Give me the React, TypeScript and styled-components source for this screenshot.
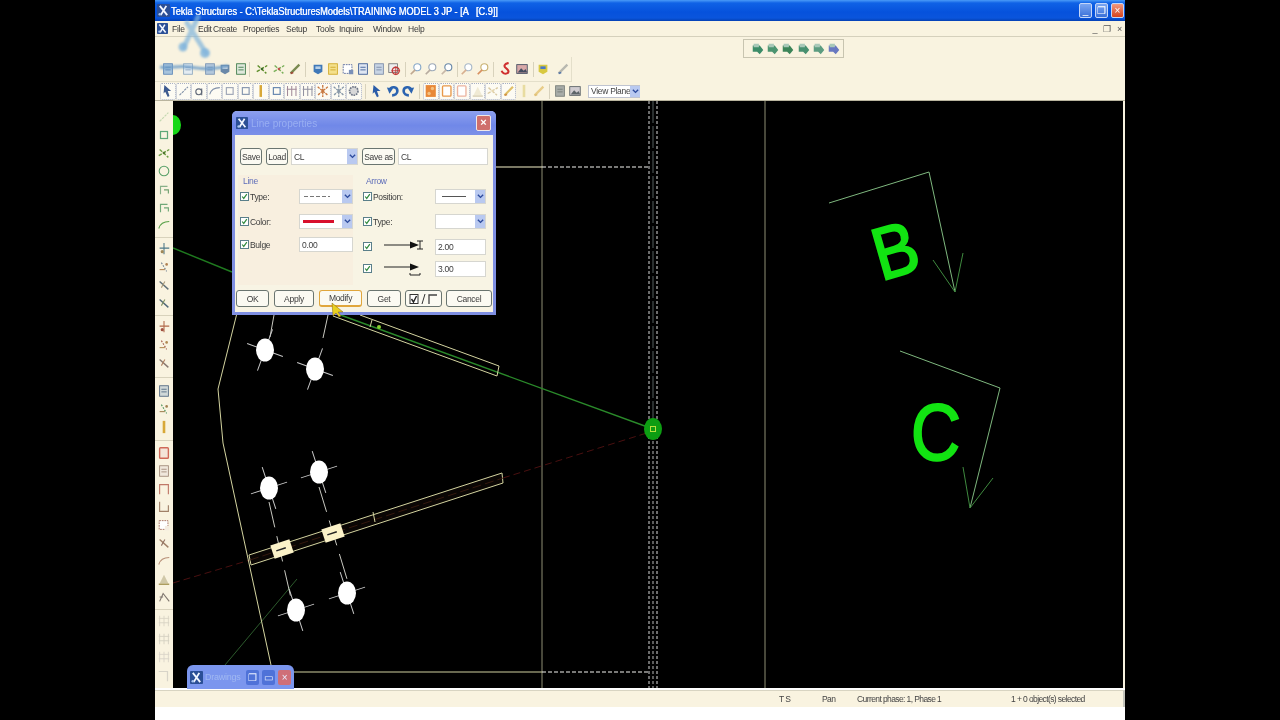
import React from 'react';
import styled, { createGlobalStyle } from 'styled-components';

const GlobalStyle = createGlobalStyle`
  html, body {
    margin: 0;
    height: 100%;
    background: #000;
    overflow: hidden;
  }
`;

const CREAM = '#f9f3e0';
const UI_FONT = '"Liberation Sans", Arial, sans-serif';

type IconSpec = { kind: string; a?: string; b?: string };

const Shapes: Record<string, (a: string, b: string) => React.ReactNode> = {
  page: (a, b) => (
    <>
      <rect x="3" y="2" width="10" height="12" fill={b} stroke={a} />
      <path d="M5 6h6M5 9h6" stroke={a} />
    </>
  ),
  cube: (a, b) => (
    <>
      <path d="M3 3h10v8l-5 3-5-3z" fill={a} />
      <path d="M5 5h6v3H5z" fill={b} />
    </>
  ),
  dotbox: (a, b) => (
    <>
      <rect x="2.5" y="3" width="10" height="10" fill="#fff" stroke={a} strokeDasharray="2 1" />
      <rect x="9" y="9" width="5" height="5" fill={b} />
    </>
  ),
  target: a => (
    <>
      <rect x="2" y="2" width="10" height="10" fill="#eee" stroke="#777" />
      <circle cx="10" cy="10" r="4" fill="none" stroke={a} strokeWidth="1.5" />
      <path d="M10 5v10M5 10h10" stroke={a} />
    </>
  ),
  zoom: (a, b) => (
    <>
      <circle cx="9.5" cy="6" r="4" fill="#fff" stroke={a} strokeWidth="1.3" />
      <path d="M7 9l-5 5" stroke={b} strokeWidth="2" />
    </>
  ),
  cross: (a, b) => (
    <>
      <path d="M2 11L14 4M3 4l10 9" stroke={a} strokeWidth="1.6" strokeDasharray="4 1.5" />
      <circle cx="8" cy="8" r="1.5" fill={b} />
    </>
  ),
  pencil: (a, b) => (
    <>
      <path d="M3 13L13 3" stroke={a} strokeWidth="2.6" />
      <path d="M3 13l3-1" stroke={b} strokeWidth="2" />
    </>
  ),
  hook: a => (
    <path d="M11 1C6 2 5 5 8 7c3 2 4 5 1 6-2 1-5 0-6-3" fill="none" stroke={a} strokeWidth="2.4" />
  ),
  picture: (a, b) => (
    <>
      <rect x="2" y="3" width="12" height="10" fill={b} stroke={a} />
      <path d="M3 12l4-5 3 3 2-2 2 4z" fill={a} />
    </>
  ),
  arrowUp: a => <path d="M4 1l8 7H8l2 6-2 1-3-6-2 2z" fill={a} />,
  undo: a => (
    <>
      <path d="M4 7c2-5 9-4 9 1 0 3-3 5-6 5" fill="none" stroke={a} strokeWidth="3" />
      <path d="M1 4l7 1-4 6z" fill={a} />
    </>
  ),
  redo: a => (
    <>
      <path d="M12 7C10 2 3 3 3 8c0 3 3 5 6 5" fill="none" stroke={a} strokeWidth="3" />
      <path d="M15 4L8 5l4 6z" fill={a} />
    </>
  ),
  tile: (a, b) => <rect x="3" y="2" width="10" height="12" rx="1" fill={b} stroke={a} strokeWidth="1.6" />,
  solid: (a, b) => (
    <>
      <rect x="2" y="1" width="12" height="14" fill={a} />
      <circle cx="10" cy="5" r="2" fill={b} />
      <circle cx="6" cy="11" r="2" fill={b} />
    </>
  ),
  slash: a => <path d="M3 13L13 3" stroke={a} strokeWidth="1.3" strokeDasharray="3 1" />,
  letter: a => (
    <>
      <circle cx="8" cy="9" r="3.5" fill="none" stroke={a} strokeWidth="1.3" />
      <path d="M11.5 5v8" stroke={a} strokeWidth="1.3" />
    </>
  ),
  curve: a => <path d="M2 12C4 5 10 4 14 4" fill="none" stroke={a} strokeWidth="1.2" />,
  square: a => <rect x="4" y="4" width="8" height="8" fill="none" stroke={a} strokeWidth="1.4" />,
  bar: a => <rect x="6.5" y="1" width="3" height="14" fill={a} />,
  columns: a => <path d="M3 2v12M8 2v12M13 2v12M2 6h12" stroke={a} strokeWidth="1.2" />,
  star: a => <path d="M2 3l12 10M14 3L2 13M8 1v14" stroke={a} strokeWidth="1.6" strokeDasharray="3 1" />,
  gear: (a, b) => <circle cx="8" cy="8" r="5" fill={b} stroke={a} strokeWidth="2" strokeDasharray="2 1" />,
  side: (a, b) => (
    <>
      <path d="M2 4h8l4 5-4 5-3-3H2z" fill={a} />
      <rect x="3" y="2" width="6" height="4" fill={b} />
    </>
  ),
  circle: a => <circle cx="8" cy="8" r="5.5" fill="none" stroke={a} strokeWidth="1.2" />,
  corner: (a, b) => (
    <>
      <path d="M4 14V5h8" fill="none" stroke={a} strokeWidth="1.3" />
      <path d="M8 9h5v4" fill="none" stroke={b} strokeWidth="1.3" />
    </>
  ),
  dim: (a, b) => (
    <>
      <path d="M8 1v13M3 7h11" stroke={a} strokeWidth="1.2" />
      <circle cx="6" cy="11" r="1.8" fill={b} />
    </>
  ),
  diag: (a, b) => (
    <>
      <path d="M3 4l10 9" stroke={a} strokeWidth="1.6" />
      <path d="M9 4l-4 7" stroke={b} strokeWidth="1.2" />
    </>
  ),
  dot: (a, b) => (
    <>
      <path d="M5 3l6 10" stroke={a} strokeWidth="1.2" strokeDasharray="2 1.5" />
      <circle cx="11" cy="5" r="1.5" fill={b} />
      <path d="M3 11h6" stroke={b} strokeWidth="1.2" />
    </>
  ),
  arch: a => <path d="M3 14V3h10v11" fill="none" stroke={a} strokeWidth="1.3" />,
  cup: a => <path d="M3 2v11h10V6" fill="none" stroke={a} strokeWidth="1.3" />,
  tri: (a, b) => (
    <>
      <path d="M8 3l5 10H3z" fill={b} />
      <path d="M2 14h12" stroke={a} strokeWidth="1.6" />
    </>
  ),
  kay: a => <path d="M3 13l4-9 7 9M3 8h4" fill="none" stroke={a} strokeWidth="1.3" />,
  grid: a => <path d="M3 2v12M8 2v12M13 2v12M2 5h12M2 10h12" stroke={a} strokeWidth="1" />,
  hookEnd: a => <path d="M2 4h10v11" fill="none" stroke={a} strokeWidth="1.4" />,
};

function Glyph({ kind, a = '#5b7fc0', b = '#cfd8e8' }: IconSpec) {
  return (
    <svg viewBox="0 0 16 16" width="14" height="14">
      {Shapes[kind]?.(a, b)}
    </svg>
  );
}

function AppLogo({ size = 13 }: { size?: number }) {
  return (
    <LogoSvg viewBox="0 0 14 14" width={size} height={size}>
      <rect width="14" height="14" rx="1" fill="#2b4f96" />
      <path d="M3 2l8 10M10 2L4 12" stroke="#f2f6ff" strokeWidth="2" />
      <circle cx="3" cy="11" r="1.4" fill="#a8c4f0" />
    </LogoSvg>
  );
}

const LogoSvg = styled.svg`
  flex: none;
`;

const Page = styled.div`
  position: relative;
  width: 970px;
  height: 720px;
  margin-left: 155px;
  background: #fff;
  display: flex;
  flex-direction: column;
  font-family: ${UI_FONT};
  filter: blur(0.35px);
  overflow: hidden;
`;

const TitleBar = styled.div`
  height: 21px;
  flex: none;
  display: flex;
  align-items: center;
  padding: 0 1px 0 2px;
  background: linear-gradient(#4a9bf8 0, #0f62e6 3px, #0652dc 12px, #0a55dc 18px, #0440b4 21px);
  color: #f4f8ff;
`;

const TitleText = styled.span`
  margin-left: 1px;
  font-size: 10.5px;
  white-space: pre;
  flex: 1;
  transform: scaleX(0.875);
  transform-origin: left center;
  text-shadow: 0.4px 0 0 currentColor;
`;

const WinBtn = styled.div<{ $red?: boolean }>`
  width: 13px;
  height: 15px;
  margin-left: 3px;
  box-sizing: border-box;
  border: 1px solid #c4d6f8;
  border-radius: 2px;
  background: ${p => (p.$red ? 'linear-gradient(#f09a80, #d8431c)' : 'linear-gradient(#7aa6f2, #3a70d8)')};
  color: #fff;
  font-size: 10px;
  line-height: 13px;
  text-align: center;
`;

const MenuBar = styled.div`
  height: 15px;
  flex: none;
  display: flex;
  align-items: center;
  background: ${CREAM};
  border-bottom: 1px solid #d5d0bc;
  padding-left: 2px;
  font-size: 8.5px;
  letter-spacing: -0.25px;
  color: #3a3a3a;
`;

const MenuItem = styled.span<{ $w: number }>`
  width: ${p => p.$w}px;
  flex: none;
`;

const MdiControls = styled.div`
  margin-left: auto;
  display: flex;
  gap: 6px;
  padding-right: 3px;
  font-size: 9px;
  color: #555;
`;

const ToolArea = styled.div`
  height: 64px;
  flex: none;
  box-sizing: border-box;
  padding-top: 20px;
  background: ${CREAM};
  border-bottom: 1px solid #b9b49e;
  display: flex;
  flex-direction: column;
  position: relative;
`;

const UpperBar = styled.div`
  width: 417px;
  height: 25px;
  flex: none;
  box-sizing: border-box;
  display: flex;
  align-items: center;
  padding-left: 5.5px;
  border-right: 1px solid #e4dfca;
  border-bottom: 1px solid #e4dfca;
`;

const LowerBar = styled.div`
  height: 18px;
  flex: none;
  display: flex;
  align-items: center;
  padding-left: 5px;
`;

const ToolBtn = styled.div<{ $w?: number; $ml?: number; $dash?: boolean }>`
  width: ${p => p.$w ?? 15.5}px;
  margin-left: ${p => p.$ml ?? 0}px;
  height: 17px;
  flex: none;
  display: flex;
  align-items: center;
  justify-content: center;
  box-sizing: border-box;
  ${p => p.$dash && 'background: #fdfbf3; border: 1px dotted #a8b0c4; border-radius: 2px;'}
`;

const ToolRule = styled.div<{ $ml: number }>`
  width: 1px;
  height: 15px;
  margin-left: ${p => p.$ml}px;
  flex: none;
  background: #d8d2bc;
`;

const ToolSep = styled.div<{ $w?: number }>`
  width: ${p => p.$w ?? 8}px;
  height: 15px;
  flex: none;
  display: flex;
  justify-content: center;
  &::after {
    content: '';
    width: 1px;
    background: #d8d2bc;
  }
`;

const ViewCombo = styled.div`
  width: 52px;
  height: 13px;
  margin-left: 5px;
  box-sizing: border-box;
  border: 1px solid #c0c4d0;
  background: #fff;
  display: flex;
  align-items: center;
  font-size: 8.5px;
  letter-spacing: -0.3px;
  white-space: nowrap;
  padding-left: 2px;
  color: #444;
  justify-content: space-between;
`;

const ChevronBox = styled.div`
  width: 10px;
  height: 100%;
  flex: none;
  background: #b9c9f0;
  color: #2c4a9c;
  display: flex;
  align-items: center;
  justify-content: center;
`;

const FloatBar = styled.div`
  position: absolute;
  left: 588px;
  top: 2px;
  width: 101px;
  height: 19px;
  box-sizing: border-box;
  border: 1px solid #c8c4b0;
  display: flex;
  align-items: center;
  padding-left: 6px;
`;

const FloatBtn = styled.div`
  width: 15.3px;
  flex: none;
  display: flex;
  justify-content: center;
`;

const Middle = styled.div`
  height: 587px;
  flex: none;
  display: flex;
  background: ${CREAM};
`;

const SideBar = styled.div`
  width: 18px;
  flex: none;
  padding-top: 7px;
  box-sizing: border-box;
  background: ${CREAM};
  display: flex;
  flex-direction: column;
`;

const SideBtn = styled.div`
  height: 18px;
  flex: none;
  display: flex;
  align-items: center;
  justify-content: center;
`;

const SideSep = styled.div<{ $h?: number }>`
  height: ${p => p.$h ?? 6}px;
  flex: none;
  display: flex;
  align-items: center;
  &::after {
    content: '';
    width: 100%;
    height: 1px;
    background: #d8d2bc;
  }
`;

const Canvas = styled.div`
  width: 950px;
  flex: none;
  position: relative;
  background: #000;
`;

const Sheet = styled.svg`
  display: block;
`;

const Dialog = styled.div`
  position: absolute;
  left: 59px;
  top: 10px;
  width: 264px;
  height: 204px;
  box-sizing: border-box;
  border: 3px solid #7f8fe2;
  border-top: 0;
  border-radius: 5px 5px 0 0;
  background: #f8f4e4;
  display: flex;
  flex-direction: column;
  font-size: 8.5px;
  letter-spacing: -0.3px;
  color: #3c3c3c;
`;

const DialogTitle = styled.div`
  height: 24px;
  flex: none;
  margin: 0 -3px;
  padding: 0 5px 0 4px;
  display: flex;
  align-items: center;
  gap: 3px;
  background: linear-gradient(#8da0ee, #7088e8 60%, #7b90e8);
  border-radius: 5px 5px 0 0;
  color: #98aef2;
  font-size: 10px;
  letter-spacing: 0;
`;

const TitleLabel = styled.span`
  flex: 1;
`;

const DialogClose = styled.div`
  width: 13px;
  height: 14px;
  border: 1px solid #f0e8e8;
  border-radius: 2px;
  background: #cf6f6c;
  color: #fff;
  font-size: 11px;
  font-weight: bold;
  line-height: 13px;
  text-align: center;
`;

const TopRow = styled.div`
  display: flex;
  height: 17px;
  margin: 13px 0 0 5px;
`;

const Btn = styled.div<{ $w: number; $ml?: number; $hot?: boolean }>`
  width: ${p => p.$w}px;
  margin-left: ${p => p.$ml ?? 0}px;
  flex: none;
  box-sizing: border-box;
  display: flex;
  align-items: center;
  justify-content: center;
  gap: 2px;
  background: #fbfaf2;
  border: 1px solid ${p => (p.$hot ? '#e0a63c' : '#6a7570')};
  border-bottom-width: ${p => (p.$hot ? 2 : 1)}px;
  border-radius: 3px;
`;

const Field = styled.div<{ $w: number; $h?: number; $ml?: number }>`
  width: ${p => p.$w}px;
  height: ${p => p.$h ?? 15}px;
  margin-left: ${p => p.$ml ?? 0}px;
  flex: none;
  box-sizing: border-box;
  background: #fff;
  border: 1px solid #d6d6d0;
  display: flex;
  align-items: center;
  padding-left: 2px;
  justify-content: space-between;
`;

const Columns = styled.div`
  display: grid;
  grid-template-columns: 115px 125px;
  column-gap: 8px;
  margin: 10px 0 0 3px;
`;

const Group = styled.div<{ $tint?: boolean }>`
  height: 110px;
  display: flex;
  flex-direction: column;
  background: ${p => (p.$tint ? '#f8efdf' : 'transparent')};
  padding-left: 2px;
`;

const GroupLabel = styled.div`
  height: 14px;
  padding-left: 3px;
  color: #5d6cb8;
  line-height: 13px;
`;

const PropRow = styled.div<{ $mb?: number }>`
  height: 15px;
  margin-bottom: ${p => p.$mb ?? 10}px;
  display: flex;
  align-items: center;
  justify-content: space-between;
`;

const CheckLabel = styled.div`
  display: flex;
  align-items: center;
  gap: 1px;
`;

const Check = styled.div`
  width: 9px;
  height: 9px;
  box-sizing: border-box;
  flex: none;
  border: 1px solid #5a7f8a;
  background: #fff;
  display: flex;
  align-items: center;
  justify-content: center;
`;

const Footer = styled.div`
  margin-top: auto;
  margin-bottom: 5px;
  margin-left: 1px;
  height: 17px;
  display: flex;
`;

const Minimized = styled.div`
  position: absolute;
  left: 14px;
  bottom: -1px;
  width: 107px;
  height: 24px;
  box-sizing: border-box;
  padding: 0 3px;
  border-radius: 6px 6px 0 0;
  background: #7b96ee;
  display: flex;
  align-items: center;
  color: #a0b8f2;
  font-size: 9px;
  letter-spacing: -0.25px;
`;

const MiniLabel = styled.span`
  margin-left: 2px;
  width: 38px;
  flex: none;
  white-space: nowrap;
`;

const MiniBtn = styled.div<{ $red?: boolean }>`
  width: 13px;
  height: 15px;
  margin-left: 3px;
  flex: none;
  border-radius: 2px;
  background: ${p => (p.$red ? '#cf6f78' : '#4f72d8')};
  color: #e8eeff;
  font-size: 10px;
  line-height: 15px;
  text-align: center;
`;

const StatusBar = styled.div`
  height: 17px;
  flex: none;
  box-sizing: border-box;
  margin-top: 2px;
  background: ${CREAM};
  border-top: 1px solid #d8d4c2;
  border-right: 2px solid #c4c4bc;
  display: flex;
  align-items: center;
  padding-left: 624px;
  font-size: 8.5px;
  letter-spacing: -0.6px;
  color: #444;
`;

const StatusCell = styled.span<{ $w: number }>`
  width: ${p => p.$w}px;
  flex: none;
`;

const Overlay = styled.svg<{ $soft?: boolean }>`
  position: absolute;
  left: 0;
  top: 0;
  pointer-events: none;
  ${p => p.$soft && 'filter: blur(1.3px);'}
`;

type UpperItem = (IconSpec & { m?: number }) | { sep: number };

// margins keep each button over its place in the source toolbar
const upperRow: UpperItem[] = [
  { kind: 'page', a: '#5c86b8', b: '#a8c4dc' },
  { kind: 'page', a: '#8fa8c0', b: '#e4ecf2', m: 5 },
  { kind: 'page', a: '#7a94b4', b: '#b4c8dc', m: 7 },
  { kind: 'cube', a: '#6a88a8', b: '#d4dce4' },
  { kind: 'page', a: '#3c7a48', b: '#dfe8dc', m: 1 },
  { sep: 0.5 },
  { kind: 'cross', a: '#5f8f2c', b: '#3a6a2a', m: 4.5 },
  { kind: 'cross', a: '#7ab05a', b: '#c0504c', m: 2 },
  { kind: 'pencil', a: '#7a8a50', b: '#a04838', m: 1 },
  { sep: 2.5 },
  { kind: 'cube', a: '#3f78b8', b: '#b8d0e8', m: 4.5 },
  { kind: 'page', a: '#d0a828', b: '#f4e08c' },
  { kind: 'dotbox', a: '#56689c', b: '#7a90b8' },
  { kind: 'page', a: '#3a5a94', b: '#dfe6f2' },
  { kind: 'page', a: '#7c8ca8', b: '#c8d4e4', m: 1 },
  { kind: 'target', a: '#c03838' },
  { sep: 3.5 },
  { kind: 'zoom', a: '#88a8c8', b: '#c0a890', m: 2.5 },
  { kind: 'zoom', a: '#9ca8b8', b: '#b8aca0' },
  { kind: 'zoom', a: '#6888a8', b: '#c8b8a8', m: 1 },
  { sep: 2 },
  { kind: 'zoom', a: '#a8b8c8', b: '#d8b090', m: 2 },
  { kind: 'zoom', a: '#c8b070', b: '#d89060', m: 1 },
  { sep: 2.5 },
  { kind: 'hook', a: '#d03030', m: 4.5 },
  { kind: 'picture', a: '#444c60', b: '#d8a8a8', m: 1 },
  { sep: 3 },
  { kind: 'cube', a: '#d8c840', b: '#4a78c8', m: 2 },
  { kind: 'pencil', a: '#b8b8b0', b: '#5878a8', m: 5 },
];

const snapRow: IconSpec[] = [
  { kind: 'arrowUp', a: '#3c5a90' },
  { kind: 'slash', a: '#8090a8' },
  { kind: 'letter', a: '#606878' },
  { kind: 'curve', a: '#8090a8' },
  { kind: 'square', a: '#a0a8b8' },
  { kind: 'square', a: '#8898b0' },
  { kind: 'bar', a: '#d8a838' },
  { kind: 'square', a: '#6888b0' },
  { kind: 'columns', a: '#a08898' },
  { kind: 'columns', a: '#9090a0' },
  { kind: 'star', a: '#c87840' },
  { kind: 'star', a: '#8898a8' },
  { kind: 'gear', a: '#707888', b: '#d8d8d8' },
];

const toleranceRow: IconSpec[] = [
  { kind: 'solid', a: '#e88838', b: '#f4c080' },
  { kind: 'tile', a: '#e89848', b: '#fff' },
  { kind: 'tile', a: '#ecb4a0', b: '#fff' },
  { kind: 'tri', a: '#d4ccb0', b: '#f0ead4' },
  { kind: 'cross', a: '#d8c8a0', b: '#e8d8b0' },
  { kind: 'pencil', a: '#e0c068', b: '#d09048' },
  { kind: 'bar', a: '#e8dca0' },
  { kind: 'pencil', a: '#e8cc88', b: '#e0c078' },
];

const sideGroups: { items: IconSpec[]; gap?: number }[] = [
  {
    items: [
      { kind: 'slash', a: '#c4d8b0' },
      { kind: 'square', a: '#5fa878' },
      { kind: 'cross', a: '#70a048', b: '#507830' },
      { kind: 'circle', a: '#58a068' },
      { kind: 'corner', a: '#88b088', b: '#70a070' },
      { kind: 'corner', a: '#70a878', b: '#70a878' },
      { kind: 'curve', a: '#58a048' },
    ],
  },
  {
    items: [
      { kind: 'dim', a: '#4c7888', b: '#a08858' },
      { kind: 'dot', a: '#708090', b: '#b08050' },
      { kind: 'diag', a: '#607078', b: '#a89878' },
      { kind: 'diag', a: '#506878', b: '#809060' },
    ],
  },
  {
    items: [
      { kind: 'dim', a: '#b06848', b: '#a05040' },
      { kind: 'dot', a: '#a05848', b: '#b08850' },
      { kind: 'diag', a: '#887870', b: '#b08060' },
    ],
  },
  {
    items: [
      { kind: 'page', a: '#506880', b: '#d0d8d8' },
      { kind: 'dot', a: '#489058', b: '#a08050' },
      { kind: 'bar', a: '#d8a838' },
    ],
    gap: 10,
  },
  {
    items: [
      { kind: 'tile', a: '#d06858', b: '#f4e4d8' },
      { kind: 'page', a: '#a08878', b: '#f0e8dc' },
      { kind: 'arch', a: '#c07868' },
      { kind: 'cup', a: '#a08068' },
      { kind: 'dotbox', a: '#a06858', b: '#f4ece0' },
      { kind: 'diag', a: '#a08068', b: '#907060' },
      { kind: 'curve', a: '#b89078' },
      { kind: 'tri', a: '#a89858', b: '#d0c8a8' },
      { kind: 'kay', a: '#807870' },
    ],
    gap: 8,
  },
  {
    items: [
      { kind: 'grid', a: '#d8d4c4' },
      { kind: 'grid', a: '#d4d0c0' },
      { kind: 'grid', a: '#d8d4c8' },
      { kind: 'hookEnd', a: '#d8d4c8' },
    ],
  },
];

const floatIcons = ['#3c8c68', '#4c9470', '#3c8458', '#489070', '#5c9c80', '#6878c0'];

const menu = [
  ['File', 26],
  ['Edit', 15],
  ['Create', 30],
  ['Properties', 43],
  ['Setup', 30],
  ['Tools', 23],
  ['Inquire', 34],
  ['Window', 35],
  ['Help', 30],
] as const;

const bolts = [
  [265, 350, 20],
  [315, 369, 20],
  [269, 488, -18],
  [319, 472, -18],
  [296, 610, -18],
  [347, 593, -18],
];

function Chevron() {
  return (
    <ChevronBox>
      <svg viewBox="0 0 8 8" width="7" height="7">
        <path d="M1 2l3 3 3-3" fill="none" stroke="currentColor" strokeWidth="1.6" />
      </svg>
    </ChevronBox>
  );
}

function Tick() {
  return (
    <Check>
      <svg viewBox="0 0 9 9" width="7" height="7">
        <path d="M1.5 4.5l2 2.5 4-5.5" fill="none" stroke="#2f8a3c" strokeWidth="1.5" />
      </svg>
    </Check>
  );
}

function ArrowSample({ under }: { under?: boolean }) {
  return (
    <svg viewBox="0 0 40 14" width="40" height="14">
      <path d="M0 5h26" stroke="#222" />
      <path d="M26 1.5l9 3.5-9 3.5z" fill="#111" />
      {under ? (
        <path d="M26 11v2h10v-2" fill="none" stroke="#222" />
      ) : (
        <path d="M36 1v8M33 1h6M33 9h6" fill="none" stroke="#222" />
      )}
    </svg>
  );
}

function Drawing() {
  const yellow = '#d4d4a0';
  return (
    <Sheet viewBox="173 101 950 587" width="950" height="587">
      <path d="M173 115a8 10 0 0 1 8 10a8 10 0 0 1-8 10z" fill="#18d818" />
      <path d="M542 101v587M765 101v587" stroke="#8f8f74" />
      <path d="M496 167h46" stroke="#f4f0c8" />
      <path d="M542 167h107M542 672h108" stroke="#f4f4f0" strokeDasharray="4 2" />
      <path d="M293 672h249" stroke="#d0d0a0" />
      <path d="M649 101v587M657 101v587" stroke="#d8d8d8" strokeDasharray="3 2" />
      <path d="M653 101v330" stroke="#555f5f" strokeDasharray="22 3" />
      <path d="M653 431v257" stroke="#b8b8b8" strokeDasharray="3 2" />

      <path d="M173 248l59 24" stroke="#1f7a1f" strokeWidth="1.4" />
      <path d="M335 313l318 116" stroke="#2a8a2a" strokeWidth="1.4" />
      <path d="M173 583l77-23M503 478l147-46" stroke="#4a1010" strokeDasharray="7 4" />
      <path d="M297 579l-72 86" stroke="#2c5a2c" />

      <path d="M237 313l-19 76 5 54 48 222" fill="none" stroke={yellow} />
      <path d="M360 315l139 51-2 10-164-60" fill="none" stroke={yellow} />
      <path d="M372 320l-2 7" stroke={yellow} />
      <circle cx="379" cy="327" r="2" fill="#88d030" />
      <path d="M249 555l253-82 1 10-252 82z" fill="#0a0604" stroke={yellow} />
      <path d="M250 560l253-82" stroke="#34180e" strokeDasharray="9 4" />
      <path d="M373 512l2 10" stroke={yellow} />

      <path d="M269 502l24 105M319 487l28 92" stroke="#c8c8c0" strokeDasharray="26 9" />
      <path d="M274 315l-4 22M328 315l-5 23" stroke="#c8c8c0" />
      {bolts.map(([x, y, angle]) => (
        <g key={`${x}-${y}`} transform={`rotate(${angle} ${x} ${y})`}>
          <path d={`M${x - 19} ${y}h38M${x} ${y - 22}v44`} stroke="#c8c8c8" />
        </g>
      ))}
      {bolts.map(([x, y]) => (
        <ellipse key={`${x}-${y}`} cx={x} cy={y} rx="9" ry="11.5" fill="#fff" />
      ))}

      <g transform="rotate(-18 282 549)">
        <rect x="272" y="542" width="20" height="14" fill="#fbf2c8" />
        <path d="M276 549h10" stroke="#222" strokeWidth="1.4" />
      </g>
      <g transform="rotate(-18 333 533)">
        <rect x="323" y="526" width="20" height="14" fill="#fbf2c8" />
        <path d="M327 533h10" stroke="#222" strokeWidth="1.4" />
      </g>

      <ellipse cx="653" cy="429" rx="9" ry="11" fill="#0d9d12" />
      <rect x="650.5" y="426.5" width="5" height="5" fill="none" stroke="#b8e040" />

      <g fill="none" stroke="#7fb87f">
        <path d="M829 203l100-31 26 120" />
        <path d="M900 351l100 37-30 120" />
      </g>
      <g fill="none" stroke="#3f8a3f">
        <path d="M933 260l22 32 8-39" />
        <path d="M963 467l7 41 23-30" />
      </g>
      <text
        transform="translate(881 281) rotate(-16) scale(0.9 1)"
        fontFamily={UI_FONT}
        fontSize="74"
        fill="#12e412"
        stroke="#12e412"
        strokeWidth="2"
      >
        B
      </text>
      <text
        transform="translate(910 459) rotate(2) scale(0.86 1)"
        fontFamily={UI_FONT}
        fontSize="80"
        fill="#12e412"
        stroke="#12e412"
        strokeWidth="2"
      >
        C
      </text>
    </Sheet>
  );
}

function LineDialog() {
  return (
    <Dialog>
      <DialogTitle>
        <AppLogo size={12} />
        <TitleLabel>Line properties</TitleLabel>
        <DialogClose>×</DialogClose>
      </DialogTitle>
      <TopRow>
        <Btn $w={22}>Save</Btn>
        <Btn $w={22} $ml={4}>Load</Btn>
        <Field $w={67} $h={17} $ml={3}>
          CL
          <Chevron />
        </Field>
        <Btn $w={33} $ml={4}>Save as</Btn>
        <Field $w={90} $h={17} $ml={3}>CL</Field>
      </TopRow>
      <Columns>
        <Group $tint>
          <GroupLabel>Line</GroupLabel>
          <PropRow>
            <CheckLabel><Tick />Type:</CheckLabel>
            <Field $w={54}>
              <svg width="30" height="3"><path d="M2 1.5h26" stroke="#777" strokeDasharray="4 2" /></svg>
              <Chevron />
            </Field>
          </PropRow>
          <PropRow $mb={8}>
            <CheckLabel><Tick />Color:</CheckLabel>
            <Field $w={54}>
              <svg width="34" height="4"><rect x="1" width="31" height="3" fill="#d8102c" /></svg>
              <Chevron />
            </Field>
          </PropRow>
          <PropRow>
            <CheckLabel><Tick />Bulge</CheckLabel>
            <Field $w={54}>0.00</Field>
          </PropRow>
        </Group>
        <Group>
          <GroupLabel>Arrow</GroupLabel>
          <PropRow>
            <CheckLabel><Tick />Position:</CheckLabel>
            <Field $w={51}>
              <svg width="30" height="3"><path d="M4 1.5h24" stroke="#555" /></svg>
              <Chevron />
            </Field>
          </PropRow>
          <PropRow>
            <CheckLabel><Tick />Type:</CheckLabel>
            <Field $w={51}>
              <span />
              <Chevron />
            </Field>
          </PropRow>
          <PropRow $mb={7}>
            <Tick />
            <ArrowSample />
            <Field $w={51} $h={16}>2.00</Field>
          </PropRow>
          <PropRow $mb={0}>
            <Tick />
            <ArrowSample under />
            <Field $w={51} $h={16}>3.00</Field>
          </PropRow>
        </Group>
      </Columns>
      <Footer>
        <Btn $w={33}>OK</Btn>
        <Btn $w={40} $ml={5}>Apply</Btn>
        <Btn $w={43} $ml={5} $hot>Modify</Btn>
        <Btn $w={34} $ml={5}>Get</Btn>
        <Btn $w={37} $ml={4}>
          <svg viewBox="0 0 30 12" width="30" height="12">
            <rect x="1" y="1.5" width="8" height="9" fill="#fff" stroke="#333" />
            <path d="M2.5 6l2 3 3-6" fill="none" stroke="#222" strokeWidth="1.4" />
            <path d="M13 11l3-10" stroke="#333" />
            <path d="M20 11V2h8" fill="none" stroke="#444" strokeWidth="1.3" />
          </svg>
        </Btn>
        <Btn $w={46} $ml={4}>Cancel</Btn>
      </Footer>
    </Dialog>
  );
}

export default function App() {
  return (
    <>
      <GlobalStyle />
      <Page>
        <TitleBar>
          <AppLogo />
          <TitleText>Tekla Structures - C:\TeklaStructuresModels\TRAINING MODEL 3 JP - [A   [C.9]]</TitleText>
          <WinBtn>_</WinBtn>
          <WinBtn>❐</WinBtn>
          <WinBtn $red>×</WinBtn>
        </TitleBar>
        <MenuBar>
          <AppLogo size={11} />
          <MenuItem $w={4} />
          {menu.map(([label, w]) => (
            <MenuItem key={label} $w={w}>{label}</MenuItem>
          ))}
          <MdiControls>
            <span>_</span>
            <span>❐</span>
            <span>×</span>
          </MdiControls>
        </MenuBar>
        <ToolArea>
          <FloatBar>
            {floatIcons.map((color, i) => (
              <FloatBtn key={i}>
                <Glyph kind="side" a={color} b="#a8c8b8" />
              </FloatBtn>
            ))}
          </FloatBar>
          <UpperBar>
            {upperRow.map((item, i) =>
              'sep' in item ? (
                <ToolRule key={i} $ml={item.sep} />
              ) : (
                <ToolBtn key={i} $w={15} $ml={item.m}>
                  <Glyph kind={item.kind} a={item.a} b={item.b} />
                </ToolBtn>
              ),
            )}
          </UpperBar>
          <LowerBar>
            {snapRow.map((item, i) => (
              <ToolBtn key={i} $dash>
                <Glyph {...item} />
              </ToolBtn>
            ))}
            <ToolSep $w={8} />
            <ToolBtn><Glyph kind="arrowUp" a="#2a5ca8" /></ToolBtn>
            <ToolBtn><Glyph kind="undo" a="#2c64b0" /></ToolBtn>
            <ToolBtn><Glyph kind="redo" a="#2c64b0" /></ToolBtn>
            <ToolSep $w={7} />
            {toleranceRow.map((item, i) => (
              <ToolBtn key={i} $dash={i < 6}>
                <Glyph {...item} />
              </ToolBtn>
            ))}
            <ToolSep $w={5} />
            <ToolBtn><Glyph kind="page" a="#767c78" b="#a8aca8" /></ToolBtn>
            <ToolBtn><Glyph kind="picture" a="#5c6468" b="#d0ccd0" /></ToolBtn>
            <ViewCombo>
              View Plane
              <Chevron />
            </ViewCombo>
          </LowerBar>
        </ToolArea>
        <Middle>
          <SideBar>
            {sideGroups.map((group, i) => (
              <React.Fragment key={i}>
                {i > 0 && <SideSep $h={group.gap} />}
                {group.items.map((item, j) => (
                  <SideBtn key={j}>
                    <Glyph {...item} />
                  </SideBtn>
                ))}
              </React.Fragment>
            ))}
          </SideBar>
          <Canvas>
            <Drawing />
            <LineDialog />
            <Minimized>
              <AppLogo size={13} />
              <MiniLabel>Drawings</MiniLabel>
              <MiniBtn>❐</MiniBtn>
              <MiniBtn>▭</MiniBtn>
              <MiniBtn $red>×</MiniBtn>
            </Minimized>
            <Overlay width="950" height="587" viewBox="173 101 950 587">
              <path d="M332 303l1 13 3-3 3 4 2-1-3-4h5z" fill="#e8d020" stroke="#806010" strokeWidth="0.5" />
            </Overlay>
          </Canvas>
        </Middle>
        <StatusBar>
          <StatusCell $w={43}>T S</StatusCell>
          <StatusCell $w={35}>Pan</StatusCell>
          <StatusCell $w={154}>Current phase: 1, Phase 1</StatusCell>
          <StatusCell $w={110}>1 + 0 object(s) selected</StatusCell>
        </StatusBar>
        <Overlay $soft width="110" height="80" viewBox="155 0 110 80">
          <g stroke="#7fb4dc" strokeWidth="5" strokeLinecap="round" opacity="0.7">
            <path d="M184 47l14-30M206 53l-19-30" />
          </g>
          <circle cx="183" cy="47" r="4.5" fill="#7fb4dc" opacity="0.8" />
          <circle cx="205" cy="53" r="5" fill="#7fb4dc" opacity="0.8" />
          <path d="M160 67c10 2 18-2 30 0s20 3 38-1" fill="none" stroke="#6c9cc8" strokeWidth="3" opacity="0.85" />
        </Overlay>
      </Page>
    </>
  );
}
